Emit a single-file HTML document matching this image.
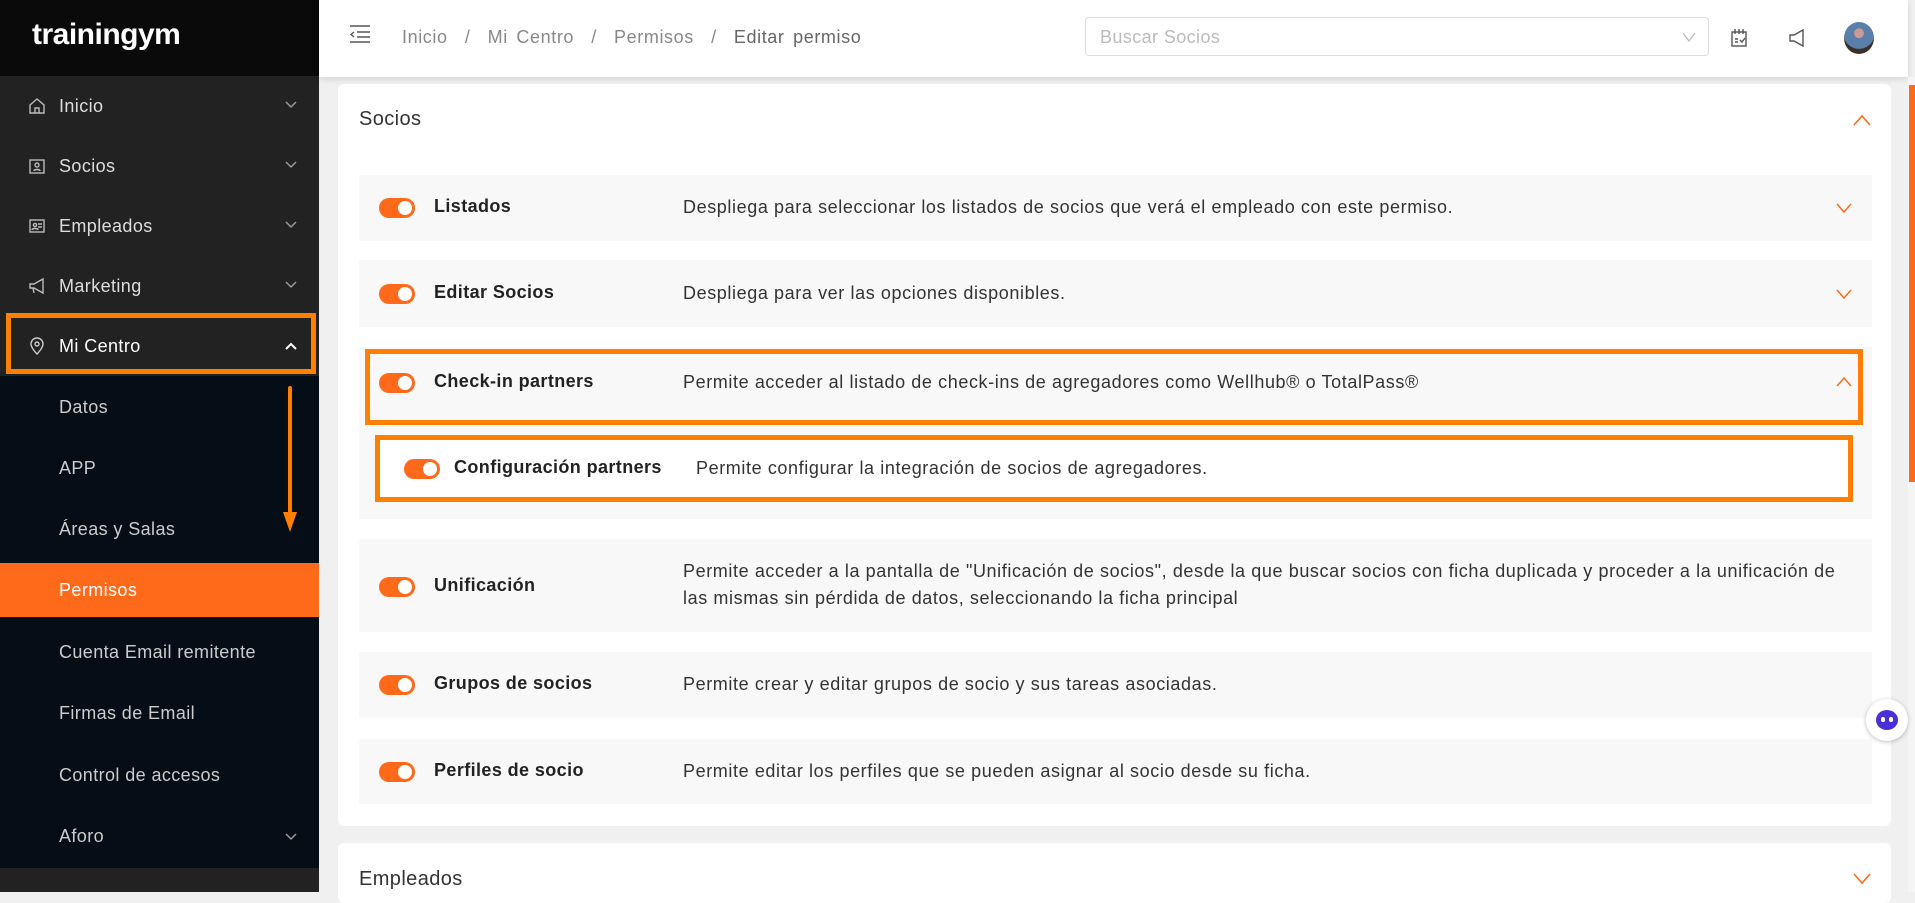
<!DOCTYPE html>
<html><head><meta charset="utf-8"><style>
*{box-sizing:border-box;margin:0;padding:0}
body{width:1915px;height:892px;overflow:hidden;background:#f0f0f0;font-family:"Liberation Sans",sans-serif;position:relative}
.abs{position:absolute}
#sb{left:0;top:0;width:319px;height:892px;background:#050d16}
#logo{left:0;top:0;width:319px;height:77px;background:#0a0a0a;color:#fff;font-size:30px;font-weight:bold;padding:18px 0 0 32px;letter-spacing:-0.5px}
.mi{left:0;width:319px;height:60px;background:#222;color:#ddd;font-size:18px;line-height:60px;padding-left:59px;letter-spacing:.4px}
.mi svg.ic{position:absolute;left:28px;top:21px}
.mi .ch{position:absolute;right:22px;top:0;color:#999;font-size:14px}
.sub{left:0;width:319px;height:61px;color:#ccc;font-size:18px;line-height:61px;padding-left:59px;letter-spacing:.4px}
#top{left:319px;top:0;width:1589px;height:77px;background:#fff;box-shadow:0 2px 6px rgba(0,0,0,.12)}
.card{background:#fff;border-radius:6px}
.row{left:359px;width:1513px;background:#f8f8f8}
.tg{position:absolute;width:36px;height:20px;border-radius:10px;background:#ff6a1a}
.tg:after{content:"";position:absolute;right:3px;top:3px;width:14px;height:14px;border-radius:50%;background:#fff}
.lb{position:absolute;font-weight:bold;font-size:18px;color:#222;letter-spacing:.4px}
.ds{position:absolute;font-size:18px;color:#333;line-height:27px;letter-spacing:.6px}
.cv{position:absolute;color:#ff6a1a}
</style></head><body>
<div id="sb" class="abs"></div>
<div id="logo" class="abs">trainingym</div>
<div class="abs" style="left:0;top:77px;width:319px;height:299px;background:#222"></div>
<div class="mi abs" style="top:76px"><svg class="ic" width="18" height="18" viewBox="0 0 18 18" fill="none" stroke="#bbb" stroke-width="1.4"><path d="M2 8L9 2l7 6v8H2z M7 16v-5h4v5"/></svg>Inicio<svg class="ch" style="top:25px" width="12" height="8" viewBox="0 0 12 8" fill="none" stroke="#999" stroke-width="1.5"><path d="M1 1l5 5 5-5"/></svg></div>
<div class="mi abs" style="top:136px"><svg class="ic" width="18" height="18" viewBox="0 0 18 18" fill="none" stroke="#bbb" stroke-width="1.4"><rect x="2" y="3" width="14" height="13"/><circle cx="9" cy="8" r="2"/><path d="M6 14c0-2 6-2 6 0"/></svg>Socios<svg class="ch" style="top:25px" width="12" height="8" viewBox="0 0 12 8" fill="none" stroke="#999" stroke-width="1.5"><path d="M1 1l5 5 5-5"/></svg></div>
<div class="mi abs" style="top:196px"><svg class="ic" width="18" height="18" viewBox="0 0 18 18" fill="none" stroke="#bbb" stroke-width="1.4"><rect x="2" y="3" width="14" height="12"/><circle cx="7" cy="8" r="1.6"/><path d="M10 7h4M10 10h4M4 13c0-2 6-2 6 0"/></svg>Empleados<svg class="ch" style="top:25px" width="12" height="8" viewBox="0 0 12 8" fill="none" stroke="#999" stroke-width="1.5"><path d="M1 1l5 5 5-5"/></svg></div>
<div class="mi abs" style="top:256px"><svg class="ic" width="18" height="18" viewBox="0 0 18 18" fill="none" stroke="#bbb" stroke-width="1.4"><path d="M2 7h4l9-5v14l-9-5H2z M5 11l1 5"/></svg>Marketing<svg class="ch" style="top:25px" width="12" height="8" viewBox="0 0 12 8" fill="none" stroke="#999" stroke-width="1.5"><path d="M1 1l5 5 5-5"/></svg></div>
<div class="mi abs" style="top:316px;color:#fff"><svg class="ic" width="18" height="18" viewBox="0 0 18 18" fill="none" stroke="#ccc" stroke-width="1.4"><path d="M9 17s6-6 6-10a6 6 0 0 0-12 0c0 4 6 10 6 10z"/><circle cx="9" cy="7" r="2"/></svg>Mi Centro<svg class="ch" style="top:26px" width="12" height="8" viewBox="0 0 12 8" fill="none" stroke="#fff" stroke-width="2"><path d="M1 7l5-5 5 5"/></svg></div>
<div class="abs" style="left:6px;top:313px;width:310px;height:61px;border:5px solid #ff8000"></div>
<div class="sub abs" style="top:377px">Datos</div>
<div class="sub abs" style="top:438px">APP</div>
<div class="sub abs" style="top:499px">Áreas y Salas</div>
<div class="sub abs" style="top:563px;height:54px;line-height:54px;background:#ff6a1a;color:#fff">Permisos</div>
<div class="sub abs" style="top:622px">Cuenta Email remitente</div>
<div class="sub abs" style="top:683px">Firmas de Email</div>
<div class="sub abs" style="top:745px">Control de accesos</div>
<div class="sub abs" style="top:806px">Aforo<svg style="position:absolute;right:22px;top:27px" width="12" height="8" viewBox="0 0 12 8" fill="none" stroke="#999" stroke-width="1.5"><path d="M1 1l5 5 5-5"/></svg></div>
<div class="abs" style="left:0;top:868px;width:319px;height:24px;background:#222"></div>
<svg class="abs" style="left:280px;top:386px" width="20" height="152" viewBox="0 0 20 152"><path d="M10 2v128" stroke="#ff8000" stroke-width="4" stroke-linecap="round"/><path d="M3 126l7 20 7-20z" fill="#ff8000"/></svg>

<div id="top" class="abs"></div>
<svg class="abs" style="left:349px;top:24px" width="22" height="20" viewBox="0 0 22 20" fill="none" stroke="#555" stroke-width="1.6"><path d="M1 2h20M8 8h13M8 13h13M1 18h20"/><path d="M5 8l-3 2.5 3 2.5" stroke-width="1.4"/></svg>
<div class="abs" style="left:402px;top:27px;font-size:18px;color:#888;letter-spacing:.6px;word-spacing:3px">Inicio &nbsp;/ &nbsp;Mi Centro &nbsp;/ &nbsp;Permisos &nbsp;/ &nbsp;<span style="color:#666">Editar permiso</span></div>
<div class="abs" style="left:1085px;top:17px;width:624px;height:39px;border:1px solid #ddd;border-radius:4px;font-size:18px;color:#bbb;padding:9px 14px;letter-spacing:.4px">Buscar Socios<svg style="position:absolute;right:12px;top:14px" width="14" height="10" viewBox="0 0 14 10" fill="none" stroke="#bbb" stroke-width="1.3"><path d="M1 1l6 8 6-8"/></svg></div>
<svg class="abs" style="left:1730px;top:28px" width="18" height="20" viewBox="0 0 18 20" fill="none" stroke="#555" stroke-width="1.4"><rect x="2" y="4" width="14" height="14"/><path d="M5 1v5M9 1v5M13 1v5M5 11h3M5 14h3M10 12l2 2 3-4"/></svg>
<svg class="abs" style="left:1788px;top:28px" width="18" height="20" viewBox="0 0 18 20" fill="none" stroke="#555" stroke-width="1.4"><path d="M2 7h4l9-5v16l-9-5H2z"/></svg>
<div class="abs" style="left:1844px;top:22px;width:30px;height:32px;border-radius:50%;background:radial-gradient(circle at 50% 35%,#c99 0 18%,#5a7fa8 20% 60%,#3a2f2a 62%)"></div>
<div class="abs" style="left:1908px;top:77px;width:7px;height:815px;background:#f5f5f5"></div>
<div class="abs" style="left:1909px;top:85px;width:6px;height:397px;background:#ff6a1a"></div>

<div class="card abs" style="left:338px;top:84px;width:1553px;height:742px"></div>
<div class="abs" style="left:359px;top:108px;font-size:20px;color:#333;letter-spacing:.4px">Socios</div>
<svg class="abs cv" style="left:1853px;top:114px" width="18" height="12" viewBox="0 0 18 12" fill="none" stroke="#ff6a1a" stroke-width="1.6"><path d="M1 11l8-9 8 9"/></svg>

<div class="row abs" style="top:175px;height:66px"><div class="tg" style="left:20px;top:23px"></div><div class="lb" style="left:75px;top:21px">Listados</div><div class="ds" style="left:324px;top:19px">Despliega para seleccionar los listados de socios que verá el empleado con este permiso.</div><svg class="cv" style="left:1477px;top:28px" width="16" height="10" viewBox="0 0 16 10" fill="none" stroke="#ff6a1a" stroke-width="1.5"><path d="M1 1l7 8 7-8"/></svg></div>
<div class="row abs" style="top:260px;height:67px"><div class="tg" style="left:20px;top:24px"></div><div class="lb" style="left:75px;top:22px">Editar Socios</div><div class="ds" style="left:324px;top:20px">Despliega para ver las opciones disponibles.</div><svg class="cv" style="left:1477px;top:29px" width="16" height="10" viewBox="0 0 16 10" fill="none" stroke="#ff6a1a" stroke-width="1.5"><path d="M1 1l7 8 7-8"/></svg></div>
<div class="row abs" style="top:347px;height:172px"><div class="tg" style="left:20px;top:26px"></div><div class="lb" style="left:75px;top:24px">Check-in partners</div><div class="ds" style="left:324px;top:22px">Permite acceder al listado de check-ins de agregadores como Wellhub® o TotalPass®</div><svg class="cv" style="left:1477px;top:30px" width="16" height="10" viewBox="0 0 16 10" fill="none" stroke="#ff6a1a" stroke-width="1.5"><path d="M1 9l7-8 7 8"/></svg></div>
<div class="abs" style="left:365px;top:349px;width:1498px;height:76px;border:5px solid #ff8000"></div>
<div class="abs" style="left:375px;top:435px;width:1478px;height:67px;background:#fff;border:5px solid #ff8000"><div class="tg" style="left:24px;top:19px"></div><div class="lb" style="left:74px;top:17px">Configuración partners</div><div class="ds" style="left:316px;top:15px">Permite configurar la integración de socios de agregadores.</div></div>
<div class="row abs" style="top:539px;height:93px"><div class="tg" style="left:20px;top:38px"></div><div class="lb" style="left:75px;top:36px">Unificación</div><div class="ds" style="left:324px;top:19px;width:1170px">Permite acceder a la pantalla de "Unificación de socios", desde la que buscar socios con ficha duplicada y proceder a la unificación de las mismas sin pérdida de datos, seleccionando la ficha principal</div></div>
<div class="row abs" style="top:652px;height:66px"><div class="tg" style="left:20px;top:23px"></div><div class="lb" style="left:75px;top:21px">Grupos de socios</div><div class="ds" style="left:324px;top:19px">Permite crear y editar grupos de socio y sus tareas asociadas.</div></div>
<div class="row abs" style="top:739px;height:65px"><div class="tg" style="left:20px;top:23px"></div><div class="lb" style="left:75px;top:21px">Perfiles de socio</div><div class="ds" style="left:324px;top:19px">Permite editar los perfiles que se pueden asignar al socio desde su ficha.</div></div>

<div class="card abs" style="left:338px;top:843px;width:1553px;height:60px"></div>
<div class="abs" style="left:359px;top:868px;font-size:20px;color:#333;letter-spacing:.4px">Empleados</div>
<svg class="abs" style="left:1853px;top:873px" width="18" height="12" viewBox="0 0 18 12" fill="none" stroke="#ff6a1a" stroke-width="1.6"><path d="M1 1l8 9 8-9"/></svg>
<div class="abs" style="left:1866px;top:699px;width:42px;height:42px;border-radius:50%;background:#fff;box-shadow:0 1px 5px rgba(0,0,0,.25)"><div style="position:absolute;left:10px;top:11px;width:22px;height:20px;border-radius:50%;background:#4b2fd6"></div><div style="position:absolute;left:15px;top:18px;width:4px;height:5px;background:#fff;border-radius:2px"></div><div style="position:absolute;left:23px;top:18px;width:4px;height:5px;background:#fff;border-radius:2px"></div></div>
</body></html>
